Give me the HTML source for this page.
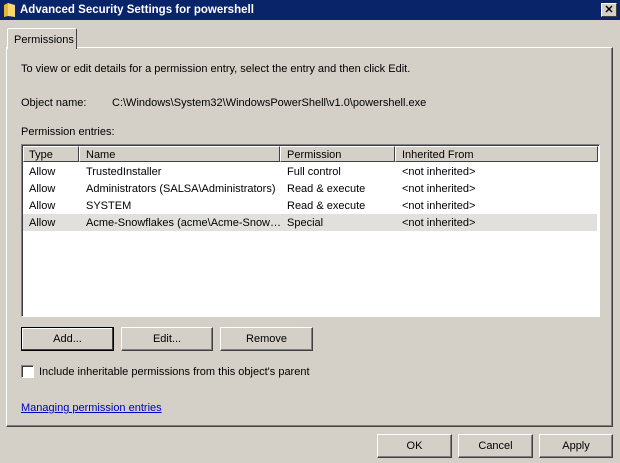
<!DOCTYPE html><html><head><style>
*{margin:0;padding:0;box-sizing:border-box}
body{width:620px;height:463px;background:#d4d0c8;font-family:"Liberation Sans",sans-serif;font-size:11px;color:#000;position:relative;overflow:hidden}
.a{position:absolute;white-space:nowrap}
.btn{position:absolute;background:#d4d0c8;border:1px solid;border-color:#fff #404040 #404040 #fff;box-shadow:inset -1px -1px 0 #808080;text-align:center;line-height:22px;font-size:11px}
.row{position:absolute;left:1px;width:574px;height:17px;line-height:19px}
.row span{position:absolute}
</style></head><body>
<div class="a" style="left:0;top:0;width:620px;height:20px;background:#0a246a"></div>
<svg class="a" style="left:3px;top:2px" width="14" height="16"><path d="M1 3 L5 1 L5 14 L1 15Z" fill="#e8b830"/><path d="M5 1 L12 3 L12 15 L5 14Z" fill="#f4d870"/></svg>
<div class="a" style="left:20px;top:4px;color:#fff;font-weight:bold;font-size:11.5px">Advanced Security Settings for powershell</div>
<div class="a" style="left:601px;top:3px;width:16px;height:14px;background:#d4d0c8;border:1px solid;border-color:#fff #404040 #404040 #fff;text-align:center;font-weight:bold;font-size:11px;line-height:12px">✕</div>
<div class="a" style="left:6px;top:47px;width:607px;height:380px;border:1px solid;border-color:#fff #404040 #404040 #fff;box-shadow:inset -1px -1px 0 #808080"></div>
<div class="a" style="left:7px;top:28px;width:70px;height:21px;background:#d4d0c8;border:1px solid;border-bottom:none;border-color:#fff #404040 #404040 #fff;border-radius:2px 2px 0 0;padding:5px 0 0 6px">Permissions</div>
<div class="a" style="left:21px;top:63px">To view or edit details for a permission entry, select the entry and then click Edit.</div>
<div class="a" style="left:21px;top:97px">Object name:</div>
<div class="a" style="left:112px;top:97px">C:\Windows\System32\WindowsPowerShell\v1.0\powershell.exe</div>
<div class="a" style="left:21px;top:126px">Permission entries:</div>
<div class="a" style="left:21px;top:144px;width:579px;height:173px;background:#fff;border:1px solid;border-color:#808080 #fff #fff #808080;box-shadow:inset 1px 1px 0 #404040"></div>
<div class="a" style="left:23px;top:146px;width:575px;height:16px;background:#d4d0c8"></div>
<div class="a" style="left:23px;top:146px;width:56px;height:16px;border:1px solid;border-color:#fff #404040 #404040 #fff;padding-left:5px;line-height:16px">Type</div>
<div class="a" style="left:79px;top:146px;width:201px;height:16px;border:1px solid;border-color:#fff #404040 #404040 #fff;padding-left:6px;line-height:16px">Name</div>
<div class="a" style="left:280px;top:146px;width:115px;height:16px;border:1px solid;border-color:#fff #404040 #404040 #fff;padding-left:6px;line-height:16px">Permission</div>
<div class="a" style="left:395px;top:146px;width:203px;height:16px;border:1px solid;border-color:#fff #404040 #404040 #fff;padding-left:6px;line-height:16px">Inherited From</div>
<div class="a" style="left:22px;top:163px;width:577px;height:80px">
<div class="row" style="top:0"><span style="left:6px">Allow</span><span style="left:63px">TrustedInstaller</span><span style="left:264px">Full control</span><span style="left:379px">&lt;not inherited&gt;</span></div>
<div class="row" style="top:17px"><span style="left:6px">Allow</span><span style="left:63px">Administrators (SALSA\Administrators)</span><span style="left:264px">Read &amp; execute</span><span style="left:379px">&lt;not inherited&gt;</span></div>
<div class="row" style="top:34px"><span style="left:6px">Allow</span><span style="left:63px">SYSTEM</span><span style="left:264px">Read &amp; execute</span><span style="left:379px">&lt;not inherited&gt;</span></div>
<div class="row" style="top:51px;background:#e2e0dc"><span style="left:6px">Allow</span><span style="left:63px">Acme-Snowflakes (acme\Acme-Snow…</span><span style="left:264px">Special</span><span style="left:379px">&lt;not inherited&gt;</span></div>
</div>
<div class="btn" style="left:21px;top:327px;width:93px;height:24px;border:1px solid #000;box-shadow:inset -1px -1px 0 #404040,inset 1px 1px 0 #fff">Add...</div>
<div class="btn" style="left:121px;top:327px;width:92px;height:24px">Edit...</div>
<div class="btn" style="left:220px;top:327px;width:93px;height:24px">Remove</div>
<div class="a" style="left:21px;top:365px;width:13px;height:13px;background:#fff;border:1px solid;border-color:#808080 #fff #fff #808080;box-shadow:inset 1px 1px 0 #404040"></div>
<div class="a" style="left:39px;top:366px">Include inheritable permissions from this object's parent</div>
<div class="a" style="left:21px;top:402px;color:#0000c0;text-decoration:underline">Managing permission entries</div>
<div class="btn" style="left:377px;top:434px;width:75px;height:24px">OK</div>
<div class="btn" style="left:458px;top:434px;width:75px;height:24px">Cancel</div>
<div class="btn" style="left:539px;top:434px;width:74px;height:24px">Apply</div>
</body></html>
